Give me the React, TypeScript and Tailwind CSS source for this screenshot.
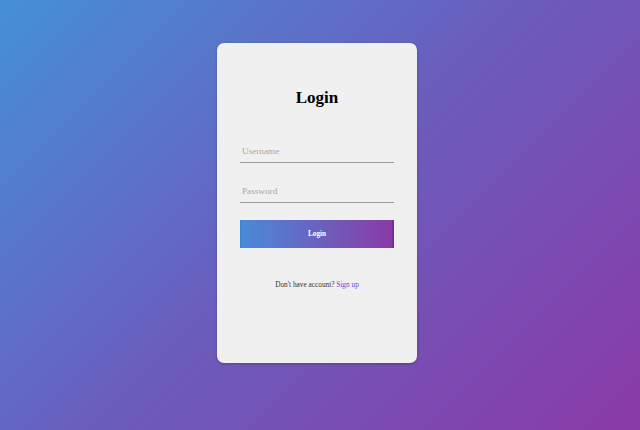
export default function App() {
  return (
    <div
      className="min-h-screen w-full bg-[linear-gradient(135deg,#4590d8_0%,#6b5cbc_50%,#8a3aa6_100%)] pt-[43px] pl-[217px]"
      style={{ fontFamily: '"Liberation Serif", "Times New Roman", serif' }}
    >
      <div className="w-[200px] h-[320px] bg-[#f0f0f0] rounded-[7px] shadow-[0_1px_3px_rgba(0,0,0,0.25)] px-[23px] pt-[44px] flex flex-col">
        <h2 className="text-[17px] leading-[22px] font-bold text-black text-center">Login</h2>
        <div className="mt-[32px] h-[22px] border-b-[1.5px] border-[#9a9a9a] flex items-center pl-[2px]">
          <span className="text-[9.2px] text-[#a6a6a6]">Username</span>
        </div>
        <div className="mt-[18px] h-[22px] border-b-[1.5px] border-[#9a9a9a] flex items-center pl-[2px]">
          <span className="text-[9.2px] text-[#a6a6a6]">Password</span>
        </div>
        <div className="mt-[17px] h-[28px] bg-[linear-gradient(90deg,#4a8ad8,#8a3aa6)] border-l-2 border-r-2 border-l-[#3b86d6] border-r-[#7a2b9c] flex items-center justify-center">
          <span className="text-[7.3px] font-bold text-white">Login</span>
        </div>
        <p className="mt-[32px] text-[7.3px] text-[#333] text-center">
          Don't have account? <span className="text-[#6b3fd6]">Sign up</span>
        </p>
      </div>
    </div>
  );
}
